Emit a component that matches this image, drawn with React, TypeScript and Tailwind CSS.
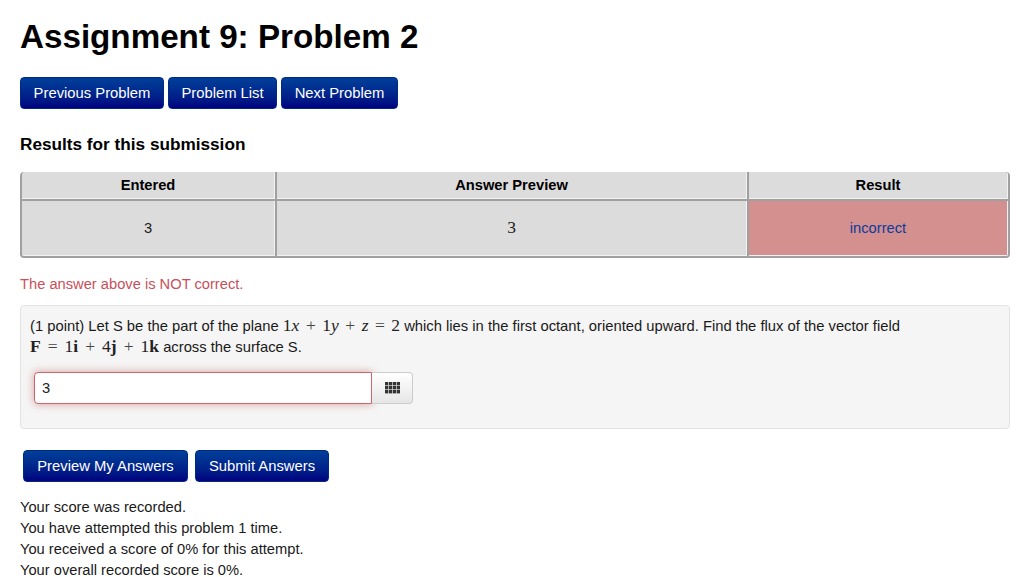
import type { ReactNode } from 'react'

const navButton =
  'flex h-8 items-center justify-center rounded border border-[#002a80] bg-gradient-to-b from-[#003f9a] to-[#00007f] text-[14.8px] text-white'

const cell = 'flex items-center justify-center border-r border-b border-[#f2f2f2] bg-[#dcdcdc]'

function GridIcon() {
  return (
    <svg width="15" height="12" viewBox="0 0 15 12" fill="#333">
      {[0, 4, 8].map((y) =>
        [0, 3.9, 7.8, 11.7].map((x) => <rect key={`${x}-${y}`} x={x} y={y} width="3.3" height="3.4" />),
      )}
    </svg>
  )
}

function Math({ children }: { children: ReactNode }) {
  return <span className="font-['Liberation_Serif',serif] text-[17.5px] leading-none text-[#222]">{children}</span>
}

function Op({ wide, children }: { wide?: boolean; children: ReactNode }) {
  return <span className={wide ? 'mx-[7px] text-[#444]' : 'mx-[6.5px] text-[#444]'}>{children}</span>
}

export default function App() {
  return (
    <div className="h-[577px] overflow-hidden bg-white pr-[14px] pl-5 font-['Liberation_Sans',sans-serif] text-[14.7px] text-[#1a1a1a]">
      <h1 className="pt-[15px] text-[33.2px] leading-[44px] font-bold text-black">Assignment 9: Problem 2</h1>

      <div className="mt-[18px] flex gap-[4px]">
        <a className={`${navButton} w-[144px]`}>Previous Problem</a>
        <a className={`${navButton} w-[109px]`}>Problem List</a>
        <a className={`${navButton} w-[117px]`}>Next Problem</a>
      </div>

      <h2 className="mt-[24px] text-[17.2px] leading-[22px] font-bold text-black">Results for this submission</h2>

      <div className="mt-[17px] grid h-[86px] grid-cols-[253px_470px_1fr] grid-rows-[27px_1fr] gap-[2px] overflow-hidden rounded-[4px] border-r-2 border-b-2 border-l-2 border-[#a0a0a0] bg-[#a0a0a0] text-center">
        <div className={`${cell} font-bold text-black`}>Entered</div>
        <div className={`${cell} font-bold text-black`}>Answer Preview</div>
        <div className={`${cell} font-bold text-black`}>Result</div>
        <div className={cell}>3</div>
        <div className={cell}>
          <Math>3</Math>
        </div>
        <div className="flex items-center justify-center border-r border-b border-[#f2f2f2] bg-[#d48f8f] text-[#0b3c9c]">
          incorrect
        </div>
      </div>

      <p className="mt-[16px] leading-[21px] text-[#c8505a]">The answer above is NOT correct.</p>

      <div className="mt-[10px] h-[124px] rounded border border-[#e3e3e3] bg-[#f5f5f5] pt-[10px] pl-[9px]">
        <p className="text-[14.78px] leading-[21px]">
          (1 point) Let S be the part of the plane{' '}
          <Math>
            1<i>x</i>
            <Op>+</Op>1<i>y</i>
            <Op>+</Op>
            <i>z</i>
            <Op>=</Op>2
          </Math>{' '}
          which lies in the first octant, oriented upward. Find the flux of the vector field
          <br />
          <Math>
            <b>F</b>
            <Op wide>=</Op>1<b>i</b>
            <Op wide>+</Op>4<b>j</b>
            <Op wide>+</Op>1<b>k</b>
          </Math>{' '}
          across the surface S.
        </p>
        <div className="mt-[14px] ml-[4px] flex">
          <input
            readOnly
            value="3"
            className="h-[32px] w-[338px] rounded-l border border-[#d0656b] bg-white px-[7px] text-[14.7px] shadow-[0_0_8px_rgba(190,80,80,0.55)] outline-none"
          />
          <button className="flex h-[32px] w-[41px] items-center justify-center rounded-r border border-l-0 border-[#ccc] bg-gradient-to-b from-white to-[#e6e6e6]">
            <GridIcon />
          </button>
        </div>
      </div>

      <div className="mt-[21px] ml-[3px] flex gap-[7px]">
        <a className={`${navButton} w-[165px]`}>Preview My Answers</a>
        <a className={`${navButton} w-[134px]`}>Submit Answers</a>
      </div>

      <div className="mt-[15px] leading-[21px]">
        <p>Your score was recorded.</p>
        <p>You have attempted this problem 1 time.</p>
        <p>You received a score of 0% for this attempt.</p>
        <p>Your overall recorded score is 0%.</p>
      </div>
    </div>
  )
}
